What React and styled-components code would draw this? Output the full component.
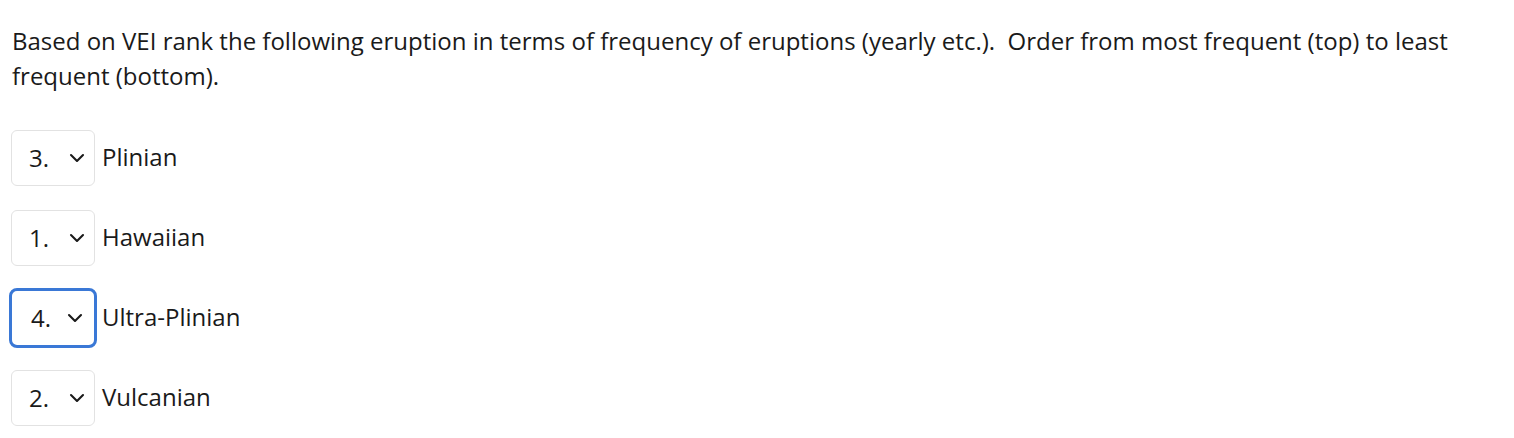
import React from "react";
import styled, {createGlobalStyle} from "styled-components";

const GlobalStyle = createGlobalStyle`
  body {
    margin: 0;
    background: #ffffff;
    font-family: "Open Sans", "Noto Sans", sans-serif;
    color: #1a1a1a;
  }
`;

const items = [
  {rank: 3, label: "Plinian"},
  {rank: 1, label: "Hawaiian"},
  {rank: 4, label: "Ultra-Plinian", active: true},
  {rank: 2, label: "Vulcanian"},
];

function Chevron() {
  return (
    <ChevronSvg viewBox="0 0 18 18" width="18" height="18">
      <path d="M3 6 L9 12 L15 6" fill="none" stroke="#1a1a1a" strokeWidth="2.1" strokeLinecap="round" strokeLinejoin="round" />
    </ChevronSvg>
  );
}

function RankRow({rank, label, active}) {
  return (
    <Row>
      <SelectBox active={active}>
        <Number>{rank}.</Number>
        <Chevron />
      </SelectBox>
      <Label>{label}</Label>
    </Row>
  );
}

function App() {
  return (
    <Page>
      <GlobalStyle />
      <Question>
        Based on VEI rank the following eruption in terms of frequency of eruptions (yearly etc.).&nbsp; Order from most frequent (top) to least frequent (bottom).
      </Question>
      <List>
        {items.map((item) => (
          <RankRow key={item.label} {...item} />
        ))}
      </List>
    </Page>
  );
}

export default App;

const Page = styled.div`
  padding: 23px 12px 0 12px;
  width: 1460px;
`;

const Question = styled.p`
  margin: 0;
  font-size: 24px;
  line-height: 35px;
`;

const List = styled.div`
  display: flex;
  flex-direction: column;
  gap: 24px;
  margin-top: 37px;
  margin-left: -1px;
`;

const Row = styled.div`
  display: flex;
  align-items: center;
  gap: 7px;
`;

const SelectBox = styled.div`
  box-sizing: border-box;
  width: 84px;
  height: 56px;
  display: flex;
  align-items: center;
  justify-content: space-between;
  padding: 0 8px 0 17px;
  border: 1px solid #e2e2e2;
  border-radius: 6px;
  background: #fff;
  ${(p) => p.active && `
    margin: -2px -2px;
    width: 88px;
    height: 60px;
    padding: 0 10px 0 19px;
    border: 3px solid #3a78d6;
    border-radius: 8px;
  `}
`;

const Number = styled.span`
  font-size: 24px;
  padding-bottom: 2px;
`;

const ChevronSvg = styled.svg`
  display: block;
`;

const Label = styled.span`
  font-size: 24px;
  padding-bottom: 3px;
`;
